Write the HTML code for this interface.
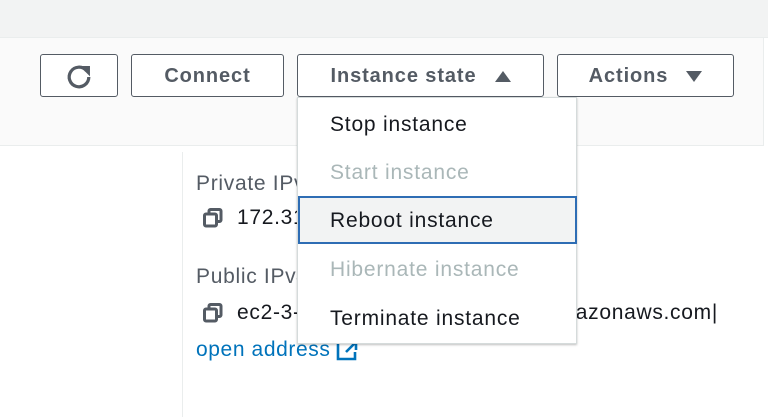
<!DOCTYPE html>
<html><head><style>
*{margin:0;padding:0;box-sizing:border-box}
body{width:768px;height:417px;position:relative;overflow:hidden;background:#fff;font-family:"Liberation Sans",sans-serif}
.top{position:absolute;left:0;top:0;width:768px;height:38px;background:#f2f3f3;border-bottom:1px solid #eaeded}
.hdr{position:absolute;left:0;top:38px;width:764px;height:108px;background:#fafafa;border-bottom:1px solid #eaeded;border-right:1px solid #eaeded}
.btn{position:absolute;top:54px;height:43px;border:1.5px solid #545b64;border-radius:3px;background:#fff;color:#545b64;font-weight:bold;font-size:20px;display:flex;align-items:center;justify-content:center;letter-spacing:.9px;padding-top:2px}
.tri{display:inline-block;width:0;height:0;border-left:8px solid transparent;border-right:8px solid transparent;margin-left:18px}
.vline{position:absolute;left:182px;top:152px;width:1px;height:265px;background:#eaeded}
.t{position:absolute;font-size:21px;color:#16191f;white-space:nowrap;letter-spacing:.7px}
.lbl{color:#545b64}
.menu{position:absolute;left:297px;top:97px;width:280px;height:247px;background:#fff;border:1px solid #d5dbdb;box-shadow:0 1px 2px rgba(0,0,0,.25)}
.it{position:absolute;left:32px;font-size:21px;color:#16191f;white-space:nowrap;letter-spacing:.8px}
.dis{color:#aab7b8}
.sel{position:absolute;left:0;top:98px;width:279px;height:48px;background:#f2f3f3;border:2px solid #2e6db4}
</style></head><body>
<div class="top"></div>
<div class="hdr"></div>
<div class="btn" style="left:40px;width:78px"><svg width="30" height="30" viewBox="0 0 26 26"><path d="M19.5 7.5A8.5 8.5 0 1 0 21.5 13" fill="none" stroke="#545b64" stroke-width="2.8"/><path d="M13.5 3.5h9v9z" fill="#545b64"/></svg></div>
<div class="btn" style="left:131px;width:153px">Connect</div>
<div class="btn" style="left:297px;width:247px">Instance state<span class="tri" style="border-bottom:11px solid #545b64"></span></div>
<div class="btn" style="left:557px;width:177px">Actions<span class="tri" style="border-top:11px solid #545b64"></span></div>
<div class="vline"></div>
<div class="t lbl" style="left:196px;top:172px">Private IPv4</div>
<svg style="position:absolute;left:203px;top:208px" width="20" height="20" viewBox="0 0 20 20"><rect x="1.5" y="6" width="12" height="12" rx="1.5" fill="none" stroke="#545b64" stroke-width="3"/><path d="M6 4.5V3A1.5 1.5 0 0 1 7.5 1.5h9A1.5 1.5 0 0 1 18 3v9a1.5 1.5 0 0 1-1.5 1.5H15" fill="none" stroke="#545b64" stroke-width="3"/></svg>
<div class="t" style="left:237px;top:206px">172.31.</div>
<div class="t lbl" style="left:196px;top:265px">Public IPv4</div>
<svg style="position:absolute;left:203px;top:303px" width="20" height="20" viewBox="0 0 20 20"><rect x="1.5" y="6" width="12" height="12" rx="1.5" fill="none" stroke="#545b64" stroke-width="3"/><path d="M6 4.5V3A1.5 1.5 0 0 1 7.5 1.5h9A1.5 1.5 0 0 1 18 3v9a1.5 1.5 0 0 1-1.5 1.5H15" fill="none" stroke="#545b64" stroke-width="3"/></svg>
<div class="t" style="left:237px;top:301px">ec2-3-</div>
<div class="t" style="right:50px;top:301px">amazonaws.com|</div>
<div class="t" style="left:196px;top:338px;color:#0073bb;letter-spacing:.6px">open address</div>
<svg style="position:absolute;left:336px;top:340px" width="22" height="21" viewBox="0 0 22 21"><path d="M9 2H2v17h17v-7" fill="none" stroke="#0073bb" stroke-width="2.6"/><path d="M10 12L19 3M12 2h8v8" fill="none" stroke="#0073bb" stroke-width="2.6"/></svg>
<div class="menu">
<div class="it" style="top:15px">Stop instance</div>
<div class="it dis" style="top:63px">Start instance</div>
<div class="sel"></div>
<div class="it" style="top:111px">Reboot instance</div>
<div class="it dis" style="top:160px">Hibernate instance</div>
<div class="it" style="top:209px">Terminate instance</div>
</div>
</body></html>
